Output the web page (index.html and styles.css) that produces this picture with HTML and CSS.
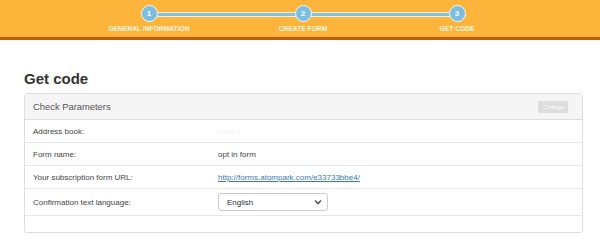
FILE: index.html
```html
<!DOCTYPE html>
<html lang="en">
<head>
    <meta charset="UTF-8">
    <title>Get code</title>
    <link rel="stylesheet" href="styles.css">
</head>
<body>

<!-- Wizard steps -->
<div class="topbar">
    <div class="steps">
        <div class="step">
            <span class="step-num">1</span>
            <span class="step-label">GENERAL INFORMATION</span>
        </div>
        <div class="step">
            <span class="step-num">2</span>
            <span class="step-label">CREATE FORM</span>
        </div>
        <div class="step">
            <span class="step-num">3</span>
            <span class="step-label">GET CODE</span>
        </div>
    </div>
</div>

<div class="content">
    <h1>Get code</h1>

    <div class="panel">
        <div class="panel-heading">
            <span>Check Parameters</span>
            <button class="btn-change">Change</button>
        </div>
        <div class="row">
            <div class="label">Address book:</div>
            <div class="value faint">User 1</div>
        </div>
        <div class="row">
            <div class="label">Form name:</div>
            <div class="value">opt in form</div>
        </div>
        <div class="row">
            <div class="label">Your subscription form URL:</div>
            <div class="value"><a href="#">http://forms.atompark.com/e33733bbe4/</a></div>
        </div>
        <div class="row row-select">
            <div class="label">Confirmation text language:</div>
            <div class="value">
                <div class="select">
                    <span>English</span>
                    <svg width="8" height="6" viewBox="0 0 8 6"><path d="M1 1.5 L4 4.5 L7 1.5" fill="none" stroke="#555" stroke-width="1.6"/></svg>
                </div>
            </div>
        </div>
        <div class="row row-empty"></div>
    </div>
</div>

</body>
</html>
```

FILE: styles.css
```css
body {
    margin: 0;
    font-family: "Liberation Sans", Arial, sans-serif;
    background: #fff;
    color: #333;
}
.topbar {
    background-color: #fdb43b;
    height: 37px;
    border-bottom: 3px solid #c25a0f;
}
.steps {
    position: relative;
    display: flex;
    margin-left: 72px;
    width: 462px;
}
.steps::before {
    content: "";
    position: absolute;
    left: 77px;
    right: 77px;
    top: 12px;
    height: 3px;
    background: #8fbfcb;
    border-top: 1px solid #e8f2f4;
    border-bottom: 1px solid #e8f2f4;
}
.step {
    flex: 1;
    display: flex;
    flex-direction: column;
    align-items: center;
    position: relative;
}
.step-num {
    margin-top: 5px;
    width: 15px;
    height: 15px;
    border: 1px solid #f4f9fb;
    border-radius: 50%;
    background: #7dbde0;
    color: #fff;
    font-weight: bold;
    font-size: 8px;
    line-height: 15px;
    text-align: center;
}
.step-label {
    margin-top: 3px;
    color: #fff4e0;
    font-weight: bold;
    font-size: 6.7px;
    line-height: 8px;
    white-space: nowrap;
}
.content {
    padding: 0 17px 0 24px;
}
h1 {
    margin: 30px 0 5px;
    font-size: 15px;
    line-height: 18px;
    color: #333;
}
.panel {
    border: 1px solid #ddd;
    border-radius: 3px;
    box-shadow: 0 1px 1px rgba(0, 0, 0, 0.05);
}
.panel-heading {
    display: flex;
    align-items: center;
    justify-content: space-between;
    height: 25px;
    padding: 0 14px 0 8px;
    background-color: #f5f5f5;
    border-bottom: 1px solid #ddd;
    font-size: 9.4px;
    color: #555;
}
.btn-change {
    border: none;
    background: #dddddd;
    color: #fff;
    font-family: inherit;
    font-size: 6px;
    padding: 0 5px;
    height: 12px;
    width: 30px;
}
.row {
    display: flex;
    align-items: center;
    height: 22px;
    padding: 0 8px;
    border-bottom: 1px solid #e6e6e6;
    font-size: 8px;
    color: #444;
}
.row-select {
    height: 26px;
}
.row-empty {
    height: 16px;
    border-bottom: none;
}
.label {
    width: 185px;
}
.value a {
    color: #3a77b6;
}
.faint {
    color: #f4f4f4;
}
.select {
    display: flex;
    align-items: center;
    justify-content: space-between;
    box-sizing: border-box;
    width: 110px;
    height: 18px;
    padding: 0 5px 0 8px;
    border: 1px solid #ccc;
    border-radius: 3px;
    color: #333;
}
```
